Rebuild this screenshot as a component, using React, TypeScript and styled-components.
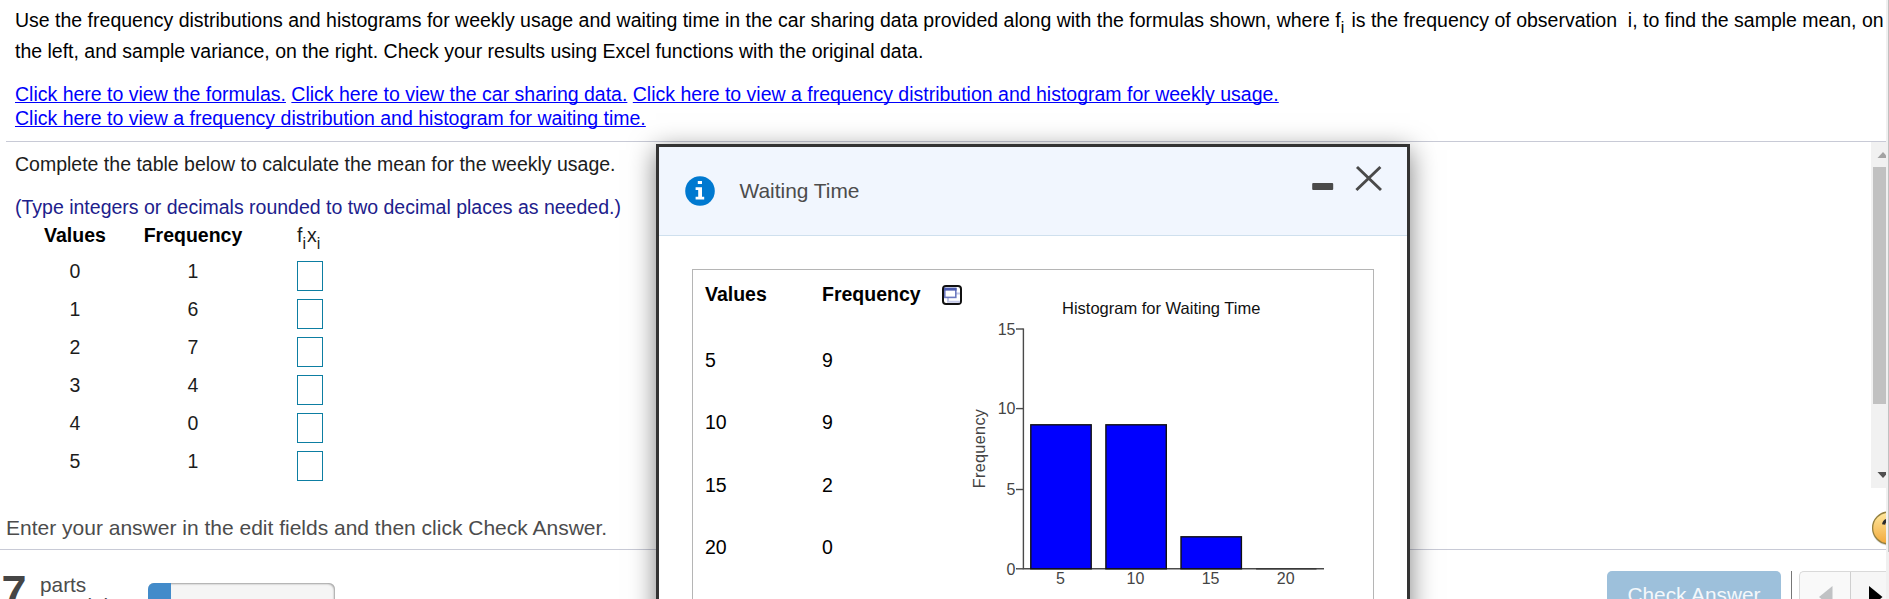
import React from 'react';
import styled, { createGlobalStyle } from 'styled-components';

const GlobalStyle = createGlobalStyle`
  *, *::before, *::after { box-sizing: border-box; }
  html, body { margin: 0; padding: 0; overflow: hidden; background: #fff; }
  body { font-family: "Liberation Sans", Arial, Helvetica, sans-serif; font-size: 19.5px; color: #000; }
`;

const Page = styled.div`
  position: relative;
  display: flex;
  width: 1889px;
  height: 599px;
  overflow: hidden;
`;

const Main = styled.main`
  display: flex;
  flex-direction: column;
  width: 1886px;
  overflow: hidden;
`;

const Rule = styled.hr<{ $inset?: number }>`
  flex: none;
  width: auto;
  height: 1px;
  margin: 0 0 0 ${p => p.$inset ?? 0}px;
  border: 0;
  background: #c8cad6;
`;

/* Question statement */

const Question = styled.section`
  flex: none;
  height: 141px;
  padding: 5px 0 0 15px;
`;

const Statement = styled.p`
  margin: 0 0 15px;
  line-height: 31px;
  white-space: nowrap;
`;

const Sub = styled.sub<{ $drop?: number; $gap?: number }>`
  margin-right: ${p => p.$gap ?? 0}px;
  font-size: 16px;
  line-height: 0;
  vertical-align: -${p => p.$drop ?? 6}px;
`;

const Links = styled.p`
  margin: 0;
  line-height: 24px;
  white-space: nowrap;
`;

const Link = styled.a`
  color: #0000fb;
  text-decoration: underline;
  text-decoration-skip-ink: none;
  text-decoration-thickness: 1px;
  text-underline-offset: 1px;
`;

/* Exercise area */

const Exercise = styled.section`
  flex: none;
  display: flex;
  justify-content: space-between;
  height: 346px;
`;

const ExerciseBody = styled.div`
  padding: 10px 0 0 15px;
  line-height: 24px;
`;

const Instruction = styled.p`
  margin: 0 0 19px;
  color: #1c1c1c;
`;

const FormatNote = styled.p`
  margin: 0 0 4px;
  color: #20208c;
`;

const TableRow = styled.div<{ $head?: boolean }>`
  display: grid;
  grid-template-columns: 120px 116px auto;
  height: ${p => (p.$head ? 36 : 38)}px;
  color: #1c1c1c;
`;

const Cell = styled.div<{ $bold?: boolean }>`
  text-align: center;
  font-weight: ${p => (p.$bold ? 700 : 400)};
  color: ${p => (p.$bold ? '#000' : 'inherit')};
`;

const AnswerCell = styled.div`
  padding-left: 46px;
`;

const AnswerInput = styled.input`
  display: block;
  width: 26px;
  height: 30px;
  margin-top: 2px;
  padding: 0;
  border: 1px solid #0d7ea2;
  background: #fff;
`;

const ScrollTrack = styled.div`
  display: flex;
  flex-direction: column;
  justify-content: space-between;
  width: 15px;
  padding-left: 2px;
  background: #f1f1f1;
`;

const ScrollThumb = styled.div`
  flex: none;
  height: 237px;
  margin-bottom: auto;
  background: #c1c1c1;
`;

const ScrollArrow = styled.svg`
  display: block;
  flex: none;
  width: 13px;
  height: 25px;
`;

/* Hint line */

const HintBar = styled.div`
  flex: none;
  display: flex;
  justify-content: space-between;
  height: 61px;
`;

const Hint = styled.p`
  margin: 28px 0 0 6px;
  font-size: 21px;
  line-height: 24px;
  color: #4c4c4c;
`;

const HelpIcon = styled.svg`
  display: block;
  width: 18px;
  height: 40px;
  margin-top: 20px;
`;

/* Footer */

const Footer = styled.footer`
  flex: none;
  display: flex;
  height: 80px;
  padding-top: 21px;
  color: #4c4c4c;
`;

const PartCount = styled.div`
  width: 40px;
  padding-left: 1.5px;
  font-size: 45px;
  font-weight: 700;
  line-height: 42px;
  color: #454545;
`;

const PartLabel = styled.div`
  width: 108px;
  padding-top: 3px;
  font-size: 20.8px;
  line-height: 21px;
`;

const Progress = styled.div`
  width: 187px;
  height: 30px;
  margin-top: 12px;
  overflow: hidden;
  border-radius: 6px;
  background: #f5f5f5;
  box-shadow: inset -1px 1px 2px rgba(0, 0, 0, 0.35);
`;

const ProgressFill = styled.div`
  width: 23px;
  height: 100%;
  background: #428bca;
`;

const Actions = styled.div`
  display: flex;
  margin-left: auto;
`;

const CheckButton = styled.button`
  display: flex;
  justify-content: center;
  width: 174px;
  height: 49px;
  padding: 6px 0 0;
  border: 0;
  border-radius: 5px;
  background: #9dc0db;
  color: #f4f8fb;
  font: 20.8px/36px "Liberation Sans", Arial, sans-serif;
`;

const Divider = styled.div`
  width: 1px;
  margin: 0 7px 0 10px;
  background: #777;
`;

const Pager = styled.div`
  display: flex;
  width: 87px;
  height: 49px;
  border: 1px solid #d9d9d9;
  border-right: 0;
  border-radius: 5px 0 0 5px;
  background: #f9f9f9;
`;

const PagerButton = styled.div<{ $next?: boolean }>`
  flex: none;
  width: ${p => (p.$next ? 36 : 50)}px;
  padding: 14px 0 0 ${p => (p.$next ? 18 : 19)}px;
  border-left: ${p => (p.$next ? '1px solid #cfcfcf' : '0')};
  background: ${p => (p.$next ? '#f6f6f6' : 'transparent')};
`;

const OuterScroll = styled.div`
  display: flex;
  justify-content: flex-end;
  width: 3px;
  background: #f0f0f0;
`;

const OuterThumb = styled.div`
  width: 1px;
  height: 552px;
  background: #c1c1c1;
`;

/* Floating dialog */

const Dialog = styled.div`
  position: absolute;
  left: 656px;
  top: 144px;
  width: 754px;
  height: 500px;
  border: 3px solid #333;
  background: #fff;
  box-shadow: 0 6px 25px rgba(0, 0, 0, 0.5);
`;

const DialogHeader = styled.header`
  display: flex;
  height: 89px;
  padding: 0 24px 0 26px;
  border-bottom: 1px solid #cfe0ee;
  background: #f1f6fe;
`;

const DialogTitle = styled.h2`
  flex: 1;
  margin: 32px 0 0 24.5px;
  font-size: 20.9px;
  font-weight: 400;
  line-height: 24px;
  color: #4c4c4c;
`;

const InfoIcon = styled.svg`
  display: block;
  margin-top: 29px;
`;

const DialogControls = styled.svg`
  display: block;
  margin-top: 18px;
`;

const DataPanel = styled.div`
  display: flex;
  width: 682px;
  height: 400px;
  margin: 33px 0 0 33px;
  border: 1px solid #b5b5b5;
`;

const DataTable = styled.div`
  display: flex;
  flex: none;
  padding-left: 12px;
`;

const DataColumn = styled.div<{ $width: number }>`
  flex: none;
  width: ${p => p.$width}px;
  padding-top: 12px;
`;

const DataHead = styled.div`
  height: 60px;
  font-weight: 700;
  line-height: 24px;
`;

const DataValue = styled.div`
  height: 62.4px;
  line-height: 36px;
`;

const PopupIcon = styled.svg`
  display: block;
  flex: none;
  width: 20px;
  height: 20px;
  margin-top: 15px;
`;

const ChartArea = styled.svg`
  display: block;
  width: 370px;
  height: 320px;
  margin-left: 5px;
  flex: none;
  font-family: "Liberation Sans", Arial, sans-serif;
`;

const rows = [
  [0, 1],
  [1, 6],
  [2, 7],
  [3, 4],
  [4, 0],
  [5, 1],
];

const waiting = [
  { value: 5, frequency: 9 },
  { value: 10, frequency: 9 },
  { value: 15, frequency: 2 },
  { value: 20, frequency: 0 },
];

const BASE = 568.8;
const UNIT = 16;

function Histogram() {
  return (
    <ChartArea viewBox="967 270 370 320">
      <text x="1161.2" y="314" textAnchor="middle" fontSize="16.5" fill="#111">
        Histogram for Waiting Time
      </text>
      <text
        transform="translate(984.5 448.5) rotate(-90)"
        textAnchor="middle"
        fontSize="16.3"
        letterSpacing="0.3"
        fill="#444"
      >
        Frequency
      </text>
      {[
        [15, 329, 335],
        [10, 408.6, 414],
        [5, 489.5, 495],
        [0, 568.8, 575],
      ].map(([label, y, ty]) => (
        <g key={label}>
          <line x1="1016" x2="1023.5" y1={y} y2={y} stroke="#4a4a4a" strokeWidth="1.4" />
          <text x="1015.5" y={ty} textAnchor="end" fontSize="16" fill="#444">
            {label}
          </text>
        </g>
      ))}
      <path d="M1023.4 328.4V568.8H1324" fill="none" stroke="#4a4a4a" strokeWidth="1.4" />
      {waiting.map(({ value, frequency }, i) => {
        const x = 1030.8 + i * 75.1;
        const h = frequency * UNIT;
        return (
          <g key={value}>
            {frequency > 0 ? (
              <rect
                x={x}
                y={BASE - h}
                width="60.4"
                height={h}
                fill="#00f"
                stroke="#111"
                strokeWidth="1.4"
              />
            ) : (
              <line x1={x} x2={x + 60.4} y1={BASE} y2={BASE} stroke="#333" strokeWidth="1.2" />
            )}
            <text x={x + 29.6} y="584" textAnchor="middle" fontSize="16" fill="#444">
              {value}
            </text>
          </g>
        );
      })}
    </ChartArea>
  );
}

function ValueColumn({ title, width, values }: { title: string; width: number; values: number[] }) {
  return (
    <DataColumn $width={width}>
      <DataHead>{title}</DataHead>
      {values.map((v, i) => (
        <DataValue key={i}>{v}</DataValue>
      ))}
    </DataColumn>
  );
}

function WaitingTimeDialog() {
  return (
    <Dialog>
      <DialogHeader>
        <InfoIcon width="30" height="30" viewBox="0 0 30 30">
          <circle cx="15" cy="15" r="14.8" fill="#0079d0" />
          <path d="M12.8 5h4.2v3h-4.2zM10.6 11.2H17v9.6h2.2V23.6h-8.6v-2.8h2.6v-6.8h-2.6z" fill="#fff" />
        </InfoIcon>
        <DialogTitle>Waiting Time</DialogTitle>
        <DialogControls width="71" height="28" viewBox="0 0 71 28">
          <rect x="0.2" y="18" width="21" height="7" rx="1" fill="#4a4a4a" />
          <path d="M45 2L69 25M68.4 2L44.4 25" stroke="#4a4a4a" strokeWidth="2.9" />
        </DialogControls>
      </DialogHeader>
      <DataPanel>
        <DataTable>
          <ValueColumn title="Values" width={117} values={waiting.map(w => w.value)} />
          <ValueColumn title="Frequency" width={120} values={waiting.map(w => w.frequency)} />
        </DataTable>
        <PopupIcon viewBox="0 0 20 20">
          <rect x="1" y="1" width="18" height="18" rx="3" fill="#fff" stroke="#111" strokeWidth="2" />
          <path d="M14 8.5h4M6 12.5v4.2h12" fill="none" stroke="#c3c8e8" strokeWidth="2" />
          <rect x="2.8" y="4" width="11" height="8.4" fill="#fff" stroke="#6d7ac0" strokeWidth="1.6" />
          <rect x="2" y="2.6" width="12.6" height="3" fill="#4c5cb0" />
        </PopupIcon>
        <Histogram />
      </DataPanel>
    </Dialog>
  );
}

export default function App() {
  return (
    <>
      <GlobalStyle />
      <Page>
        <Main>
          <Question>
            <Statement>
              Use the frequency distributions and histograms for weekly usage and waiting time in the car
              sharing data provided along with the formulas shown, where f<Sub $gap={1.8}>i</Sub> is the
              frequency of observation&nbsp; i, to find the sample mean, on
              <br />
              the left, and sample variance, on the right. Check your results using Excel functions with the
              original data.
            </Statement>
            <Links>
              <Link>Click here to view the formulas.</Link> <Link>Click here to view the car sharing data.</Link>{' '}
              <Link>Click here to view a frequency distribution and histogram for weekly usage.</Link>
              <br />
              <Link>Click here to view a frequency distribution and histogram for waiting time.</Link>
            </Links>
          </Question>
          <Rule $inset={6} />
          <Exercise>
            <ExerciseBody>
              <Instruction>Complete the table below to calculate the mean for the weekly usage.</Instruction>
              <FormatNote>(Type integers or decimals rounded to two decimal places as needed.)</FormatNote>
              <TableRow $head>
                <Cell $bold>Values</Cell>
                <Cell $bold>Frequency</Cell>
                <AnswerCell>
                  f<Sub $drop={7} $gap={1}>i</Sub>x<Sub $drop={7}>i</Sub>
                </AnswerCell>
              </TableRow>
              {rows.map(([value, frequency]) => (
                <TableRow key={value}>
                  <Cell>{value}</Cell>
                  <Cell>{frequency}</Cell>
                  <AnswerCell>
                    <AnswerInput />
                  </AnswerCell>
                </TableRow>
              ))}
            </ExerciseBody>
            <ScrollTrack>
              <ScrollArrow viewBox="0 0 13 25">
                <path d="M4.5 16L10 10l5.5 6z" fill="#a3a3a3" />
              </ScrollArrow>
              <ScrollThumb />
              <ScrollArrow viewBox="0 0 13 25">
                <path d="M4.5 9h11L10 15z" fill="#505050" />
              </ScrollArrow>
            </ScrollTrack>
          </Exercise>
          <HintBar>
            <Hint>Enter your answer in the edit fields and then click Check Answer.</Hint>
            <HelpIcon viewBox="0 0 18 40">
              <defs>
                <linearGradient id="help" x1="0" y1="0" x2="0" y2="1">
                  <stop offset="0" stopColor="#ffe9a0" />
                  <stop offset="1" stopColor="#f2a93b" />
                </linearGradient>
              </defs>
              <circle cx="20.5" cy="21.5" r="16.2" fill="#000" opacity="0.15" />
              <circle cx="20.5" cy="20" r="15.9" fill="url(#help)" stroke="#94803f" strokeWidth="1.3" />
              <path d="M15.6 16.5q.6-4 5-4.5" fill="none" stroke="#2c2c2c" strokeWidth="3.2" />
            </HelpIcon>
          </HintBar>
          <Rule />
          <Footer>
            <PartCount>7</PartCount>
            <PartLabel>
              parts
              <br />
              remaining
            </PartLabel>
            <Progress>
              <ProgressFill />
            </Progress>
            <Actions>
              <CheckButton>Check Answer</CheckButton>
              <Divider />
              <Pager>
                <PagerButton>
                  <svg width="14" height="22" viewBox="0 0 14 22">
                    <path d="M13.5 0v22L0 11z" fill="#c0c2c4" />
                  </svg>
                </PagerButton>
                <PagerButton $next>
                  <svg width="14" height="22" viewBox="0 0 14 22">
                    <path d="M0 0v22l13.5-11z" fill="#000" />
                  </svg>
                </PagerButton>
              </Pager>
            </Actions>
          </Footer>
        </Main>
        <OuterScroll>
          <OuterThumb />
        </OuterScroll>
        <WaitingTimeDialog />
      </Page>
    </>
  );
}
